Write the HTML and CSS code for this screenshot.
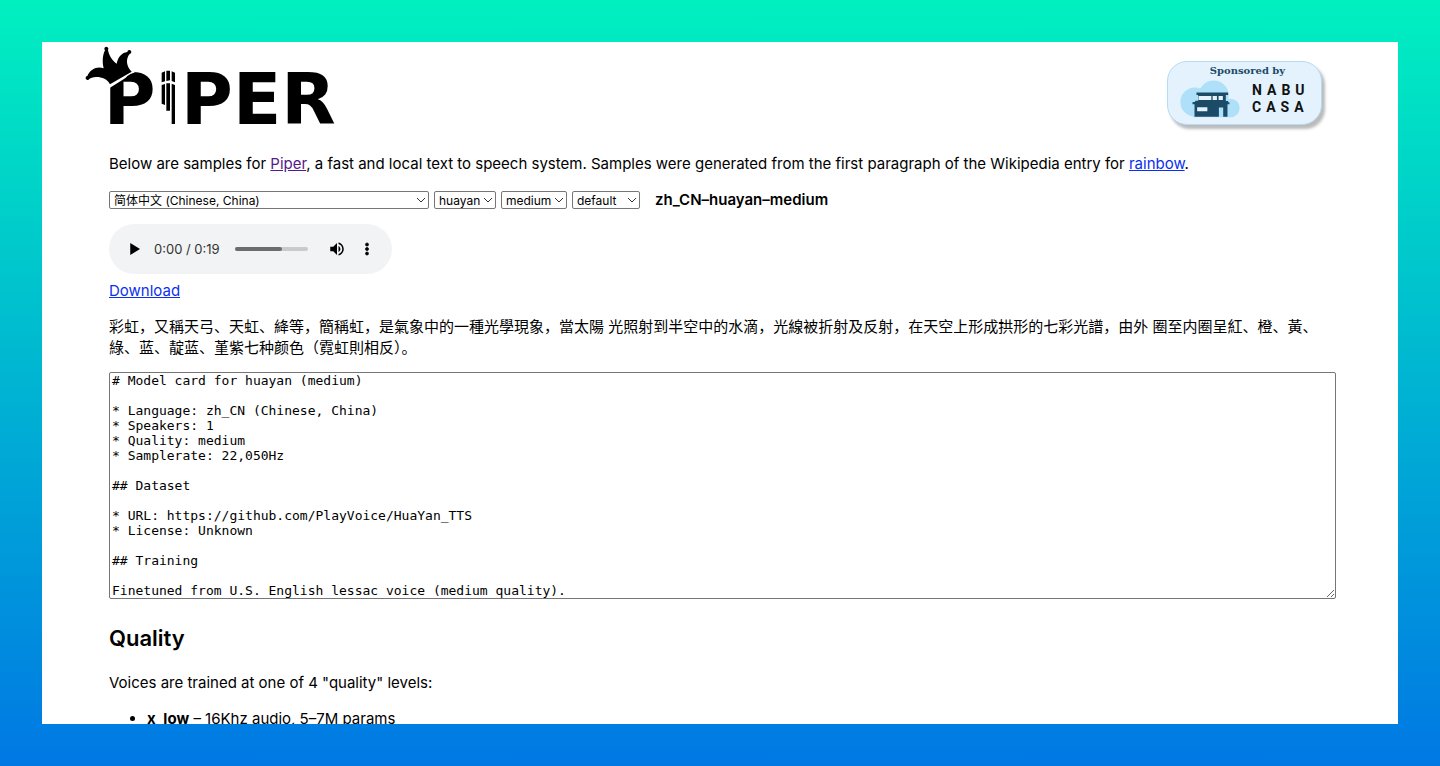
FILE: index.html
```html
<!DOCTYPE html>
<html lang="en">
  <head>
    <meta charset="utf-8">
    <title>Piper Voice Samples</title>
    <link rel="stylesheet" href="styles.css">
  </head>
  <body>
    <main class="page">
      <header class="header">
        <svg class="logo" viewBox="87 4 693 264" role="img" aria-label="Piper">
          <text class="logo-text" x="71" y="250">P</text>
          <path d="M60 60H150L170 91L90 141L60 160Z" fill="#fff"/>
          <path d="M90 131C82 116 68 109 48 109C38 109 32 112 28 115A6 6 0 1 1 22 106C32 84 52 76 71 83C66 64 68 42 75 29A6 6 0 1 1 84 28C87 44 97 60 110 69C114 48 126 36 142 34A6 6 0 1 1 149 40C137 54 138 76 155 93Z"/>
          <path d="M142 106Q152 97 166 96V120H130Z"/>
          <path d="M245 96L255 92V122L245 125ZM259 90H270V119L259 121ZM275 92L285 96V125L275 121ZM245 133L255 130V193L245 189ZM259 128H270V210H259ZM275 129L285 133V250H275Z"/>
          <text class="logo-text" x="303" y="250">P</text>
          <text class="logo-text" x="459" y="250">E</text>
          <text class="logo-text" x="604" y="250">R</text>
        </svg>
        <a class="sponsor" href="#">
          <span class="sponsor-title">Sponsored by</span>
          <span class="sponsor-brand">
            <svg class="sponsor-icon" viewBox="0 0 182 114" aria-hidden="true">
              <g fill="#aee1f9">
                <circle cx="102" cy="47" r="46"/>
                <circle cx="45" cy="66" r="44"/>
                <circle cx="153" cy="84" r="28"/>
                <path d="M40 60H153V112H40Z"/>
              </g>
              <path d="M50 37H146V45H139V63H146V67H150V73H144V111H131V83H118V111H44V73H38V66H46V62H55V45H50Z" fill="#1b4b66"/>
              <path d="M56 48H95V60H56ZM99 48H112V60H99ZM117 48H130V60H117ZM52 82H83V94H52Z" fill="#e4f2fd"/>
            </svg>
            <span class="sponsor-name">NABU<br>CASA</span>
          </span>
        </a>
      </header>

      <p>Below are samples for <a class="visited" href="#">Piper</a>, a fast and local text to speech system. Samples were generated from the first paragraph of the Wikipedia entry for <a href="#">rainbow</a>.</p>

      <form class="voices">
        <select class="select language" aria-label="Language">
          <option>简体中文 (Chinese, China)</option>
        </select>
        <select class="select voice" aria-label="Voice">
          <option>huayan</option>
        </select>
        <select class="select quality" aria-label="Quality">
          <option>medium</option>
        </select>
        <select class="select speaker" aria-label="Speaker">
          <option>default</option>
        </select>
        <strong class="voice-name">zh_CN–huayan–medium</strong>
      </form>

      <div class="player">
        <button class="player-button" type="button" aria-label="Play">
          <svg viewBox="0 0 24 24"><path d="M7 4v16l13-8z"/></svg>
        </button>
        <span class="player-time">0:00 / 0:19</span>
        <progress class="player-track" value="65" max="100" aria-label="Buffered"></progress>
        <button class="player-button" type="button" aria-label="Mute">
          <svg viewBox="0 0 24 24"><path d="M3 9v6h4l5 5V4L7 9H3zm13.500 3c0-1.770-1.020-3.290-2.500-4.030v8.050c1.480-.73 2.500-2.250 2.500-4.020zM14 3.230v2.060c2.890.86 5 3.540 5 6.710s-2.110 5.850-5 6.710v2.060c4.010-.91 7-4.490 7-8.770s-2.990-7.860-7-8.770z"/></svg>
        </button>
        <button class="player-button" type="button" aria-label="More options">
          <svg viewBox="0 0 24 24"><path d="M12 8a2 2 0 1 0 0-4 2 2 0 0 0 0 4zm0 2a2 2 0 1 0 0 4 2 2 0 0 0 0-4zm0 6a2 2 0 1 0 0 4 2 2 0 0 0 0-4z" stroke="#000"/></svg>
        </button>
      </div>
      <a class="download" href="#">Download</a>

      <p class="sample" lang="zh">彩虹，又稱天弓、天虹、絳等，簡稱虹，是氣象中的一種光學現象，當太陽 光照射到半空中的水滴，光線被折射及反射，在天空上形成拱形的七彩光譜，由外 圈至内圈呈紅、橙、黃、綠、蓝、靛蓝、堇紫七种颜色（霓虹則相反）。</p>

      <textarea class="model-card" aria-label="Model card" spellcheck="false"># Model card for huayan (medium)

* Language: zh_CN (Chinese, China)
* Speakers: 1
* Quality: medium
* Samplerate: 22,050Hz

## Dataset

* URL: https://github.com/PlayVoice/HuaYan_TTS
* License: Unknown

## Training

Finetuned from U.S. English lessac voice (medium quality).</textarea>

      <h2>Quality</h2>
      <p>Voices are trained at one of 4 "quality" levels:</p>
      <ul>
        <li><b>x_low</b> – 16Khz audio, 5–7M params</li>
      </ul>
    </main>
  </body>
</html>
```
FILE: styles.css
```css
* {
  box-sizing: border-box;
}
body {
  margin: 0;
  height: 100vh;
  padding: 42px;
  background: linear-gradient(#00f0c0, #0078e4);
  font-family: Inter, "Noto Sans CJK SC", sans-serif;
  font-size: 15px;
  line-height: 20px;
  color: #000;
}
.page {
  height: 100%;
  overflow: hidden;
  padding: 0 62px 0 67px;
  background: #fff;
}
a {
  color: #0a2fee;
}
a.visited {
  color: #551a8b;
}
p {
  margin: 0 0 16px;
}

/* header */
.header {
  display: flex;
  justify-content: space-between;
  align-items: flex-start;
  height: 96px;
  margin-bottom: 16px;
  padding-right: 14px;
}
.logo {
  width: 231px;
  height: 88px;
  overflow: visible;
}
.logo-text {
  font: bold 212px "DejaVu Sans", sans-serif;
}
.sponsor {
  width: 155px;
  height: 64px;
  margin-top: 19px;
  padding-top: 2px;
  border: 1px solid #b5dbf5;
  border-radius: 20px;
  background: #e4f2fd;
  box-shadow: 3px 4px 3px #bbb;
  text-decoration: none;
}
.sponsor-title {
  display: block;
  padding-left: 6px;
  font: bold 10px/14px "DejaVu Serif", serif;
  text-align: center;
  color: #1b4b66;
}
.sponsor-brand {
  display: flex;
  align-items: center;
  gap: 12px;
  padding: 2px 0 0 12px;
}
.sponsor-icon {
  flex: none;
  width: 60px;
  height: 38px;
}
.sponsor-name {
  font: bold 14px/17px Roboto, sans-serif;
  letter-spacing: 5px;
  color: #111;
}

/* voice pickers */
.voices {
  display: flex;
  align-items: center;
  gap: 5px;
  margin-bottom: 14px;
}
.select {
  height: 18px;
  padding: 0 4px;
  appearance: none;
  border: 1px solid #767676;
  border-radius: 2px;
  background: #fff url("data:image/svg+xml,%3Csvg xmlns='http://www.w3.org/2000/svg' width='10' height='6'%3E%3Cpath d='M1 1l4 4 4-4' fill='none' stroke='%23333'/%3E%3C/svg%3E") no-repeat right 2px center;
  font: 12px Inter, "Noto Sans CJK SC", sans-serif;
  color: #000;
}
.language {
  width: 320px;
}
.voice {
  width: 62px;
}
.quality {
  width: 66px;
}
.speaker {
  width: 68px;
}
.voice-name {
  margin-left: 10px;
  font-weight: 600;
}

/* audio player */
.player {
  display: flex;
  align-items: center;
  width: 283px;
  height: 50px;
  padding: 0 16px;
  border-radius: 25px;
  background: #f1f3f4;
}
.player-button {
  width: 18px;
  height: 18px;
  padding: 0;
  border: 0;
  background: none;
}
.player-button svg {
  display: block;
}
.player-time {
  margin: 0 15px 0 11px;
  font: 13px Inter, sans-serif;
  color: #333;
}
.player-track {
  width: 73px;
  height: 4px;
  margin-right: auto;
  appearance: none;
  border: 0;
}
.player-track::-webkit-progress-bar {
  border-radius: 2px;
  background: #c9cacb;
}
.player-track::-webkit-progress-value {
  border-radius: 2px;
  background: #6b6c6d;
}
.player-button + .player-button {
  margin-left: 12px;
}
.download {
  display: block;
  width: max-content;
  margin: 7px 0 15px;
}

.sample {
  margin-bottom: 14px;
  line-height: 21px;
}
.model-card {
  display: block;
  width: 100%;
  height: 227px;
  padding: 0 2px;
  border: 1px solid #767676;
  border-radius: 2px;
  font: 13px/15px "DejaVu Sans Mono", monospace;
  color: #000;
}

h2 {
  margin: 25px 0 21px;
  font-size: 22px;
  line-height: 28px;
  font-weight: 600;
}
ul {
  margin: 0;
  padding-left: 38px;
}
```
